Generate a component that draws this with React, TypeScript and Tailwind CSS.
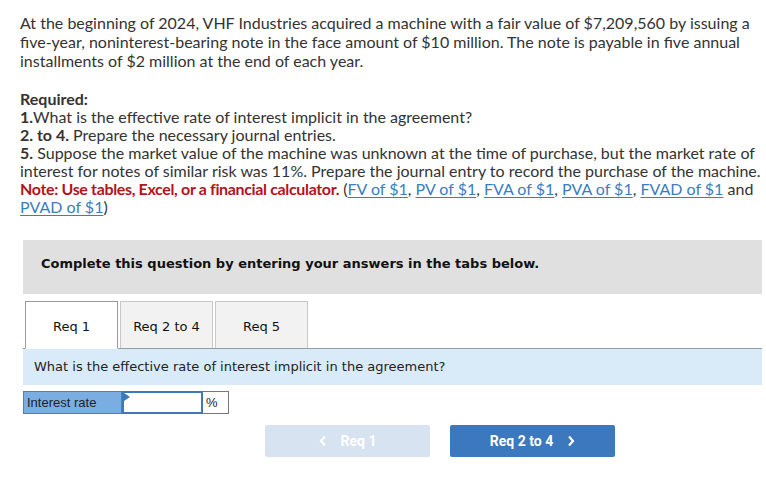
import React from "react";

const body = { fontFamily: '"Lato", "Liberation Sans", sans-serif' };
const verdana = { fontFamily: '"DejaVu Sans", Verdana, sans-serif' };
const arial = { fontFamily: '"Liberation Sans", Arial, sans-serif' };
const roboto = { fontFamily: 'Roboto, "Liberation Sans", sans-serif' };

function Link({ children }: { children: React.ReactNode }) {
  return <span className="text-[#3b7dc0] underline underline-offset-2">{children}</span>;
}

function Line({ children }: { children: React.ReactNode }) {
  return <div className="whitespace-nowrap">{children}</div>;
}

export default function App() {
  return (
    <div className="w-[766px] h-[478px] bg-white overflow-hidden">
      {/* Problem statement */}
      <div className="pl-[20px] pt-[13px] text-[16px] text-[#333]" style={body}>
        <div className="leading-[19px]">
          <Line>At the beginning of 2024, VHF Industries acquired a machine with a fair value of $7,209,560 by issuing a</Line>
          <Line>five-year, noninterest-bearing note in the face amount of $10 million. The note is payable in five annual</Line>
          <Line>installments of $2 million at the end of each year.</Line>
        </div>
        <div className="mt-[20px] leading-[18px]">
          <Line><b>Required:</b></Line>
          <Line><b>1.</b>What is the effective rate of interest implicit in the agreement?</Line>
          <Line><b>2. to 4.</b> Prepare the necessary journal entries.</Line>
          <Line><b>5.</b> Suppose the market value of the machine was unknown at the time of purchase, but the market rate of</Line>
          <Line>interest for notes of similar risk was 11%. Prepare the journal entry to record the purchase of the machine.</Line>
          <Line>
            <b className="text-[#b5121b] tracking-[-0.35px]">Note: Use tables, Excel, or a financial calculator.</b> (
            <Link>FV of $1</Link>, <Link>PV of $1</Link>, <Link>FVA of $1</Link>, <Link>PVA of $1</Link>,{" "}
            <Link>FVAD of $1</Link> and
          </Line>
          <Line>
            <Link>PVAD of $1</Link>)
          </Line>
        </div>
      </div>

      <div className="ml-[23px] w-[739px] mt-[24px]">
        {/* Instruction box */}
        <div className="h-[54px] bg-[#e0e0e0] flex items-center pl-[18px] pb-[6px]">
          <span className="text-[13px] font-bold text-[#111]" style={verdana}>
            Complete this question by entering your answers in the tabs below.
          </span>
        </div>

        {/* Tabs */}
        <div className="mt-[7px] flex items-end gap-[2px] pl-[2px] border-b border-[#999] h-[48px]">
          <div className="w-[93px] h-[48px] -mb-px pt-[3px] bg-white border border-[#999] border-b-white flex items-center justify-center text-[13px] text-[#111]" style={verdana}>
            Req 1
          </div>
          <div className="w-[93px] h-[47px] pt-[3px] bg-[#f2f2f2] border border-[#c8c8c8] border-b-0 flex items-center justify-center text-[13px] text-[#111]" style={verdana}>
            Req 2 to 4
          </div>
          <div className="w-[93px] h-[47px] pt-[3px] bg-[#f2f2f2] border border-[#c8c8c8] border-b-0 flex items-center justify-center text-[13px] text-[#111]" style={verdana}>
            Req 5
          </div>
        </div>

        {/* Question strip */}
        <div className="h-[36px] bg-[#d9ebf9] flex items-center pl-[11px]">
          <span className="text-[13px] text-[#222]" style={verdana}>
            What is the effective rate of interest implicit in the agreement?
          </span>
        </div>

        {/* Answer row */}
        <div className="mt-[6px] flex h-[23px]">
          <div className="w-[99px] h-full bg-[#7aaee3] border border-[#777] flex items-center pl-[3px] text-[13px] text-[#222]" style={arial}>
            Interest rate
          </div>
          <div className="relative w-[81px] h-full bg-white border-2 border-[#3c78bc]">
            <div className="absolute left-0 top-0 w-0 h-0 border-t-[4px] border-b-[4px] border-l-[6px] border-t-transparent border-b-transparent border-l-[#3c78bc]" />
          </div>
          <div className="w-[26px] h-full bg-white border border-[#777] border-l-0 flex items-center pl-[3px] text-[13px] text-[#222]" style={arial}>
            %
          </div>
        </div>

        {/* Navigation */}
        <div className="mt-[11px] ml-[242px] flex gap-[20px]">
          <div className="w-[165px] h-[32px] rounded-[2px] bg-[#d7e3f0] flex items-center justify-center gap-[14px] text-white text-[14px] font-bold" style={roboto}>
            <svg width="8" height="12" viewBox="0 0 8 12">
              <path d="M6 1.5 L2 6 L6 10.5" fill="none" stroke="white" strokeWidth="2.2" />
            </svg>
            <span>Req 1</span>
          </div>
          <div className="w-[165px] h-[32px] rounded-[2px] bg-[#3b78bd] flex items-center justify-center gap-[14px] text-white text-[14px] font-bold" style={roboto}>
            <span>Req 2 to 4</span>
            <svg width="8" height="12" viewBox="0 0 8 12">
              <path d="M2 1.5 L6 6 L2 10.5" fill="none" stroke="white" strokeWidth="2.2" />
            </svg>
          </div>
        </div>
      </div>
    </div>
  );
}
